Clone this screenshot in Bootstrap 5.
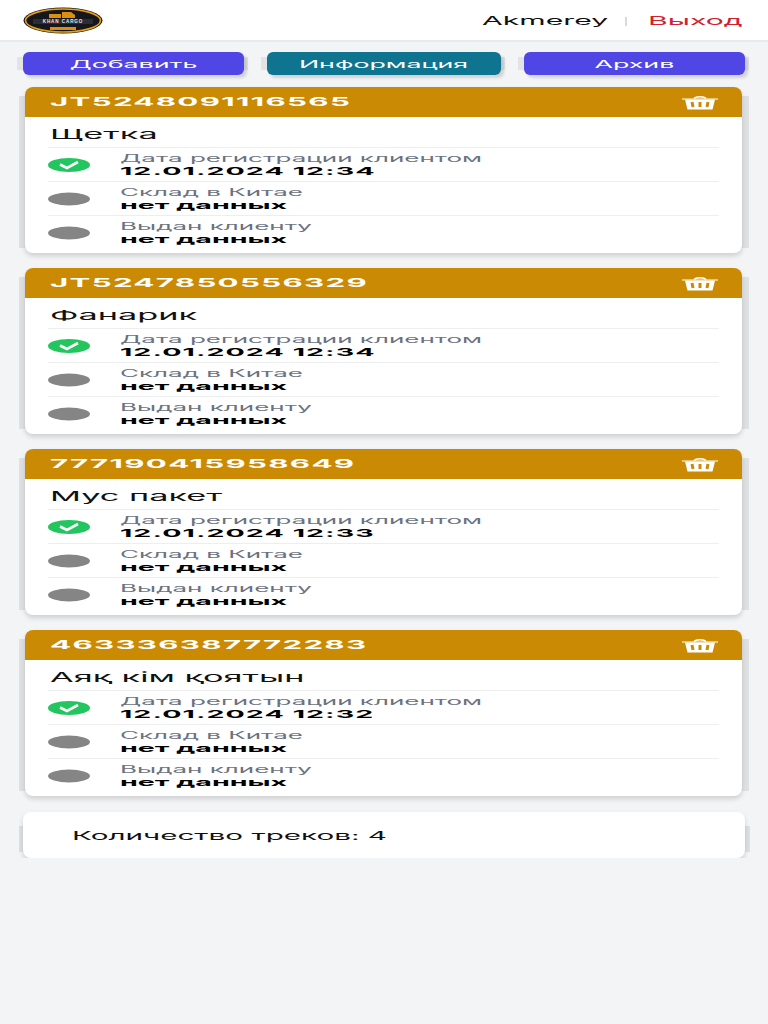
<!DOCTYPE html>
<html lang="ru">
<head>
  <meta charset="UTF-8">
  <meta name="viewport" content="width=device-width, initial-scale=1.0">
  <title>Треки</title>
  <link href="https://cdn.jsdelivr.net/npm/bootstrap@5.3.0/dist/css/bootstrap.min.css" rel="stylesheet">
  <style>
    body {
      background-color: #f3f4f6;
      font-family: Inter, "Liberation Sans", sans-serif;
      color: #111;
    }
    /* the whole screenshot is stretched sideways, so the text is too */
    .wide {
      display: inline-block;
      white-space: nowrap;
      transform: scaleX(2.6);
      transform-origin: left center;
    }
    .wide-center {
      display: inline-block;
      white-space: nowrap;
      transform: scaleX(2.6);
      transform-origin: center center;
    }
    .top-bar {
      height: 42px;
      background-color: #fff;
      border-bottom: 2px solid #e9eaec;
      padding: 0 25px 0 23px;
    }
    .user-box { padding-top: 3px; }
    .user-name { font-size: 11.6px; width: 124px; }
    .bar-sep { width: 2px; height: 9px; background-color: #d8dade; margin: 0 21px 0 19px; }
    .logout-link { font-size: 11.6px; color: #d3202c; width: 95px; }
    .action-row {
      padding: 10px 23px 0;
      gap: 23px;
    }
    .action-btn {
      height: 23px;
      flex: 1 1 0;
      padding: 1px 0 0;
      border: 0;
      border-radius: 6px;
      color: #fff;
      font-size: 10.3px;
      line-height: 22px;
      position: relative;
      box-shadow: 3px 3px 3px rgba(0,0,0,.14);
    }
    .action-btn::before {
      content: "";
      position: absolute;
      z-index: -1;
      left: -6px;
      right: -4px;
      top: 5px;
      bottom: 5px;
      background-color: #e2e3e5;
    }
    .action-btn:hover { color: #fff; }
    .btn-indigo, .btn-indigo:hover { background-color: #4f46e5; }
    .btn-teal, .btn-teal:hover { background-color: #0e7490; flex: 0 0 234px; }
    .track-list {
      padding: 12px 26px 0 25px;
      gap: 15px;
    }
    .track-card {
      position: relative;
      border: 0;
      border-radius: 8px;
      background-color: #fff;
      box-shadow: 0 3px 5px rgba(0,0,0,.15);
    }
    /* grey strips beside each card, from the stretched shadow */
    .track-card::before {
      content: "";
      position: absolute;
      z-index: -1;
      left: -6px;
      right: -7px;
      top: 9px;
      bottom: 5px;
      background-color: #dfe0e2;
    }
    .track-head {
      height: 30px;
      background-color: #ca8a04;
      color: #fff;
      border-radius: 8px 8px 0 0;
      padding: 0 24px 0 25px;
      font-size: 12px;
      font-weight: 700;
      letter-spacing: .5px;
    }
    .track-body { padding: 0 23px 4px; }
    .track-title { height: 30px; padding: 5px 0 0 2px; font-size: 13.2px; color: #111; }
    .step-row {
      height: 34px;
      border-top: 1px solid #eceef0;
    }
    .step-mark { width: 72px; flex: none; margin-right: 1px; }
    .step-text { margin-left: -1px; }
    .step-label { font-size: 10px; line-height: 13px; color: #6b7280; }
    .step-value { font-size: 11px; line-height: 13px; font-weight: 700; color: #000; }
    .step-date { letter-spacing: .4px; }
    .count-card {
      margin: 16px 23px 0;
      height: 46px;
      padding: 3px 0 0 49px;
      font-size: 11.4px;
    }
    .count-card::before { left: -4px; right: -5px; top: 14px; bottom: 6px; }
  </style>
</head>
<body>
  <div class="top-bar d-flex align-items-center justify-content-between">
    <svg width="80" height="27" viewBox="0 0 80 27">
      <ellipse cx="40" cy="13.5" rx="39.5" ry="13" fill="#15171c"/>
      <ellipse cx="40" cy="13.5" rx="37.5" ry="11.5" fill="none" stroke="#e89c14" stroke-width="1.6"/>
      <path d="M26 11V7h12v4zM39 11V5h9l4 3v3z" fill="#d98f12"/>
      <rect x="10" y="12" width="60" height="5" fill="#2a2d33"/>
      <text x="40" y="16.300" text-anchor="middle" font-family="Liberation Sans" font-size="4.600" font-weight="700" letter-spacing=".9" fill="#e8e8e8">KHAN CARGO</text>
      <rect x="27" y="20" width="26" height="3" fill="#d98f12"/>
    </svg>
    <div class="user-box d-flex align-items-center">
      <span class="user-name"><span class="wide">Akmerey</span></span>
      <span class="bar-sep"></span>
      <span class="logout-link"><span class="wide">Выход</span></span>
    </div>
  </div>

  <div class="action-row d-flex">
    <button type="button" class="btn action-btn btn-indigo"><span class="wide-center">Добавить</span></button>
    <button type="button" class="btn action-btn btn-teal"><span class="wide-center">Информация</span></button>
    <button type="button" class="btn action-btn btn-indigo"><span class="wide-center">Архив</span></button>
  </div>

  <div class="track-list d-flex flex-column" id="tracks"></div>

  <div class="card track-card count-card justify-content-center">
    <div><span class="wide">Количество треков: 4</span></div>
  </div>

  <script src="https://cdn.jsdelivr.net/npm/bootstrap@5.3.0/dist/js/bootstrap.bundle.min.js"></script>
  <script>
    var tracks = [
      ["JT5248091116565", "Щетка", "12.01.2024 12:34"],
      ["JT5247850556329", "Фанарик", "12.01.2024 12:34"],
      ["777190415958649", "Мус пакет", "12.01.2024 12:33"],
      ["463336387772283", "Аяқ кім қоятын", "12.01.2024 12:32"]
    ];
    var basket = '<svg width="36" height="15" viewBox="0 0 36 15">' +
      '<path d="M0 4h36" stroke="#fff" stroke-width="1.200"/>' +
      '<path d="M12 3.500c2-2.500 10-2.500 12 0" stroke="#fff" stroke-width="1.500" fill="none"/>' +
      '<path d="M3 4.500h30l-2.500 10h-25z" fill="#fff"/>' +
      '<path d="M10 7l1 5M18 7v5M26 7l-1 5" stroke="#ca8a04" stroke-width="3"/></svg>';
    var okMark = '<svg width="42" height="14" viewBox="0 0 42 14"><ellipse cx="21" cy="7" rx="21" ry="7" fill="#22c55e"/>' +
      '<path d="M12 6.500l7 3.500 11-6" stroke="#fff" stroke-width="2.600" fill="none"/></svg>';
    var noMark = '<svg width="42" height="14" viewBox="0 0 42 14"><ellipse cx="21" cy="7" rx="21" ry="6.500" fill="#858585"/></svg>';

    function step(mark, label, value, cls) {
      return '<div class="step-row d-flex align-items-center"><div class="step-mark d-flex">' + mark + '</div>' +
        '<div class="step-text"><div class="step-label"><span class="wide">' + label + '</span></div>' +
        '<div class="step-value ' + cls + '"><span class="wide">' + value + '</span></div></div></div>';
    }

    document.getElementById("tracks").innerHTML = tracks.map(function (t) {
      return '<div class="card track-card">' +
        '<div class="track-head d-flex align-items-center justify-content-between"><span class="wide">' + t[0] + '</span>' + basket + '</div>' +
        '<div class="track-body">' +
        '<div class="track-title d-flex align-items-center"><span class="wide">' + t[1] + '</span></div>' +
        step(okMark, "Дата регистрации клиентом", t[2], "step-date") +
        step(noMark, "Склад в Китае", "нет данных", "") +
        step(noMark, "Выдан клиенту", "нет данных", "") +
        '</div></div>';
    }).join("");
  </script>
</body>
</html>
